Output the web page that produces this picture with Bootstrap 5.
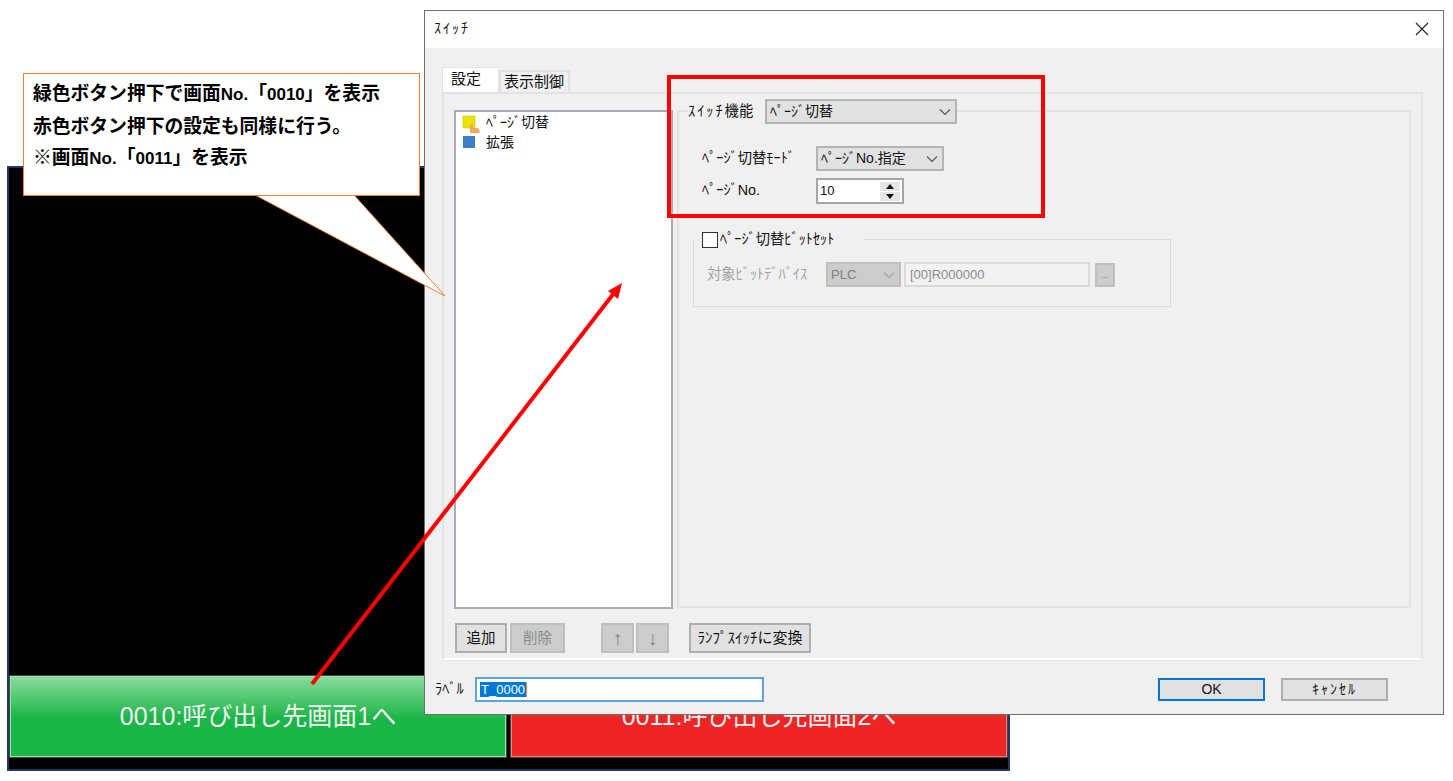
<!DOCTYPE html>
<html lang="ja">
<head>
<meta charset="utf-8">
<title>スイッチ</title>
<link href="https://cdn.jsdelivr.net/npm/bootstrap@5.3.0/dist/css/bootstrap.min.css" rel="stylesheet">
<style>
html,body{margin:0;height:781px;overflow:hidden;background:#fff}
body{position:relative;font-family:"Liberation Sans","Noto Sans CJK JP",sans-serif;font-size:14.3px;color:#111}
.hmi-panel{position:absolute;left:7px;top:166px;width:1003px;height:605px;background:#000;border:2px solid #1f3864;padding:0 0 11px;display:flex;align-items:flex-end;gap:3px}
.hmi-btn{flex:1;height:83px;border:1px solid #444;color:#f2f2f2;font-size:25px;display:flex;align-items:center;justify-content:center}
.hmi-green{background:linear-gradient(#8bdc9f,#1bb648 52%);box-shadow:inset 0 0 0 1px #9be3ad}
.hmi-red{background:linear-gradient(#f76464,#ef2424 52%);box-shadow:inset 0 0 0 1px #f77d7d}
.dlg{position:absolute;left:424px;top:10px;width:1020px;height:705px;border:1px solid #6e6e6e;background:#f0f0f0;display:flex;flex-direction:column}
.dlg-title{height:37px;background:#fff;display:flex;align-items:center;justify-content:space-between;padding:0 14px 2px 9px;font-size:14px}
.kana-wide{letter-spacing:2px}
.dlg-inner{padding:19px 20px 0 17px}
.tab-strip{display:flex;align-items:flex-end;height:25px;position:relative;z-index:1}
.tab-on{width:57px;height:25px;background:#fff;border:1px solid #e3e3e3;border-bottom:0;font-size:15px;padding:0 0 0 8px;line-height:22px}
.tab-off{width:71px;height:22px;background:#f0f0f0;border:2px solid #e0e0e0;border-bottom:0;font-size:15px;line-height:20px;padding-left:3px}
.tab-body{height:568px;border:2px solid #e3e3e3;border-bottom-color:#fff;box-shadow:0 1px 0 #e3e3e3;padding:16px 10px 0}
.tab-body-top{display:flex;gap:4px}
.tree-box{width:219px;height:499px;background:#fff;border:2px solid #a8adb5;padding:0 7px;font-size:14px}
.tree-row{display:flex;align-items:center;height:20px;gap:5px}
.tree-icon{overflow:visible;flex:none}
.fn-group{width:734px;height:498px;border:2px solid #e3e3e3;padding:0 0 0 9px}
.row-legend{display:flex;align-items:center;margin-top:-13px;height:25px}
.row-legend-label{width:77px;background:#f0f0f0;line-height:25px;white-space:nowrap}
.win-select.form-select{flex:none;height:25px;min-height:0;font-size:14px;border:2px solid #b4b4b4;border-radius:0;background-color:#e1e1e1;color:#111;padding:0 18px 0 3px;box-shadow:none;background-image:url("data:image/svg+xml,%3Csvg xmlns='http://www.w3.org/2000/svg' viewBox='0 0 12 8'%3E%3Cpath d='M1 1.500 6 6.500 11 1.500' fill='none' stroke='%23555' stroke-width='1.200'/%3E%3C/svg%3E");background-position:right 4px center;background-size:12px 8px;font-family:inherit}
.sel-w192{width:192px}.sel-w128{width:128px}.sel-w75{width:75px}
.win-select.form-select:disabled{background-color:#ccc;border-color:#bfbfbf;color:#7f7f7f;font-size:13px;background-image:url("data:image/svg+xml,%3Csvg xmlns='http://www.w3.org/2000/svg' viewBox='0 0 12 8'%3E%3Cpath d='M1 1.500 6 6.500 11 1.500' fill='none' stroke='%23a6a6a6' stroke-width='1.200'/%3E%3C/svg%3E")}
.set-row{display:flex;align-items:center;margin-left:14px}
.mode-row{margin-top:22px}
.spin-row{margin-top:7px}
.set-label{width:114px;white-space:nowrap}
.spin-box{width:88px;height:26px;background:#fff;border:2px solid #a5a5a5;display:flex;align-items:center;justify-content:space-between;padding:0 2px;font-size:13px}
.spin-arrows{width:20px;display:flex;flex-direction:column;gap:1px}
.spin-arrow{height:9px;background:#e6e6e6;display:flex;align-items:center;justify-content:center}
.bit-group{margin:35px 0 0 5px;width:478px;height:68px;border:1px solid #dcdcdc}
.bit-legend{display:flex;align-items:center;margin-top:-8px;width:170px;height:16px;background:#f0f0f0;padding-left:8px;gap:2px;white-space:nowrap}
.bit-legend .form-check-input{width:16px;height:16px;margin:0;border:1px solid #333;border-radius:0;flex:none}
.bit-row{display:flex;align-items:center;margin-top:14px;padding-left:13px;color:#a2a2a2}
.bit-label{width:119px;flex:none;white-space:nowrap}
.bit-input.form-control{flex:none;width:186px;height:25px;min-height:0;margin-left:3px;border:2px solid #dadada;border-radius:0;background:#f2f2f2;color:#8c8c8c;font-size:13px;padding:0 4px;font-family:inherit}
.win-btn.btn{border-radius:0;border:2px solid #adadad;background:#e1e1e1;color:#111;font-size:14.500px;padding:0;height:30px;line-height:26px;opacity:1;font-family:inherit;white-space:nowrap}
.win-btn.btn:disabled{background:#ccc;border-color:#bfbfbf;color:#8a8a8a;opacity:1}
.btn-row{display:flex;margin-top:14px;padding-left:1px}
.btn-w52{width:52px}.btn-w55{width:55px;margin-left:3px}
.win-btn.btn.btn-w33a{width:33px;margin-left:36px;font-size:20px}.win-btn.btn.btn-w33b{width:33px;margin-left:2px;font-size:20px}
.win-btn.btn.btn-w122{width:122px;margin-left:20px;font-size:15px}
.win-btn.btn.btn-dots{flex:none;width:20px;height:24px;margin-left:5px;font-size:9px;line-height:20px}
.label-row{display:flex;align-items:flex-start;margin-top:17px;padding-left:10px}
.label-text{width:40px;line-height:25px}
.label-input.form-control{width:289px;height:25px;min-height:0;border:2px solid #5aa5e0;border-radius:0;padding:0 3px;font-size:13px;font-family:inherit;box-shadow:none;background:#fff;display:flex;align-items:center}
.sel-text{background:#0078d7;color:#fff;border-right:1px solid #f08a2c;line-height:15px;padding:0 1px}
.win-btn.btn.foot-btn{width:107px;height:23px;line-height:19px;font-size:14px;margin-top:1px}
.win-btn.btn.foot-ok{border-color:#0078d7;margin-left:auto}
.win-btn.btn.foot-cancel{margin-left:16px;margin-right:55px}
.note-box{position:absolute;left:23px;top:73px;width:397px;height:123px;background:#fff;border:1px solid #ed7d31;padding:4px 9px;font-weight:700;font-size:18.800px;line-height:31.500px;color:#000;white-space:nowrap}
.note-latin{font-size:17px}
.overlay-svg{position:absolute;left:0;top:0;width:1453px;height:781px;pointer-events:none}
.red-frame{position:absolute;left:667px;top:75px;width:378px;height:143px;border:4px solid #f00;pointer-events:none}
</style>
</head>
<body>

<div class="hmi-panel">
  <div class="hmi-btn hmi-green">0010:呼び出し先画面1へ</div>
  <div class="hmi-btn hmi-red">0011:呼び出し先画面2へ</div>
</div>

<div class="dlg">
  <div class="dlg-title">
    <span class="kana-wide">ｽｲｯﾁ</span>
    <svg width="14" height="14" viewBox="0 0 14 14"><path d="M1 1 13 13M13 1 1 13" stroke="#222" stroke-width="1.100" fill="none"/></svg>
  </div>
  <div class="dlg-inner">
    <div class="tab-strip">
      <div class="tab-on">設定</div>
      <div class="tab-off">表示制御</div>
    </div>
    <div class="tab-body">
      <div class="tab-body-top">
        <div class="tree-box">
          <div class="tree-row">
            <svg class="tree-icon" width="18" height="20" viewBox="0 0 18 20"><rect x="0" y="4" width="12" height="12" fill="#e8e400" stroke="#c9c200" stroke-width=".6"/><path d="M7 21V13c0-1.800 3-1.800 3 0v3h4c1.500 0 2.500 1 2.500 2.500V21z" fill="#f3a95c"/></svg>
            <span>ﾍﾟｰｼﾞ切替</span>
          </div>
          <div class="tree-row">
            <svg class="tree-icon" width="18" height="20" viewBox="0 0 18 20"><rect x="0" y="4" width="12" height="12" fill="#3d7fc4"/></svg>
            <span>拡張</span>
          </div>
        </div>
        <div class="fn-group">
          <div class="row-legend">
            <span class="row-legend-label"><span class="kana-wide">ｽｲｯﾁ</span>機能</span>
            <select class="form-select win-select sel-w192"><option>ﾍﾟｰｼﾞ切替</option></select>
          </div>
          <div class="set-row mode-row">
            <span class="set-label">ﾍﾟｰｼﾞ切替ﾓｰﾄﾞ</span>
            <select class="form-select win-select sel-w128"><option>ﾍﾟｰｼﾞNo.指定</option></select>
          </div>
          <div class="set-row spin-row">
            <span class="set-label">ﾍﾟｰｼﾞNo.</span>
            <div class="spin-box">
              <span>10</span>
              <div class="spin-arrows">
                <div class="spin-arrow"><svg width="8" height="5" viewBox="0 0 8 5"><path d="M4 0 8 5H0z" fill="#111"/></svg></div>
                <div class="spin-arrow"><svg width="8" height="5" viewBox="0 0 8 5"><path d="M0 0H8L4 5z" fill="#111"/></svg></div>
              </div>
            </div>
          </div>
          <div class="bit-group">
            <div class="bit-legend">
              <input class="form-check-input" type="checkbox" aria-label="ﾍﾟｰｼﾞ切替ﾋﾞｯﾄｾｯﾄ">
              <span>ﾍﾟｰｼﾞ切替ﾋﾞｯﾄｾｯﾄ</span>
            </div>
            <div class="bit-row">
              <span class="bit-label">対象ﾋﾞｯﾄﾃﾞﾊﾞｲｽ</span>
              <select class="form-select win-select sel-w75" disabled><option>PLC</option></select>
              <input class="form-control bit-input" value="[00]R000000" disabled>
              <button class="btn win-btn btn-dots" disabled>...</button>
            </div>
          </div>
        </div>
      </div>
      <div class="btn-row">
        <button class="btn win-btn btn-w52">追加</button>
        <button class="btn win-btn btn-w55" disabled>削除</button>
        <button class="btn win-btn btn-w33a" disabled>↑</button>
        <button class="btn win-btn btn-w33b" disabled>↓</button>
        <button class="btn win-btn btn-w122">ﾗﾝﾌﾟｽｲｯﾁに変換</button>
      </div>
    </div>
  </div>
  <div class="label-row">
    <span class="label-text">ﾗﾍﾞﾙ</span>
    <div class="form-control label-input"><span class="sel-text">T_0000</span></div>
    <button class="btn win-btn foot-btn foot-ok">OK</button>
    <button class="btn win-btn foot-btn foot-cancel"><span class="kana-wide">ｷｬﾝｾﾙ</span></button>
  </div>
</div>

<svg class="overlay-svg" viewBox="0 0 1453 781">
  <polygon points="255,195 354,195 445,296" fill="#fff" stroke="#ed7d31" stroke-width="1"/>
  <path d="M312 684 614 293" stroke="#f00" stroke-width="4" fill="none"/>
  <polygon points="622,283 618,299 608,291" fill="#f00"/>
</svg>
<div class="note-box">緑色ボタン押下で画面<span class="note-latin">No.</span>「<span class="note-latin">0010</span>」を表示<br>赤色ボタン押下の設定も同様に行う。<br>※画面<span class="note-latin">No.</span>「<span class="note-latin">0011</span>」を表示</div>
<div class="red-frame"></div>

</body>
</html>
